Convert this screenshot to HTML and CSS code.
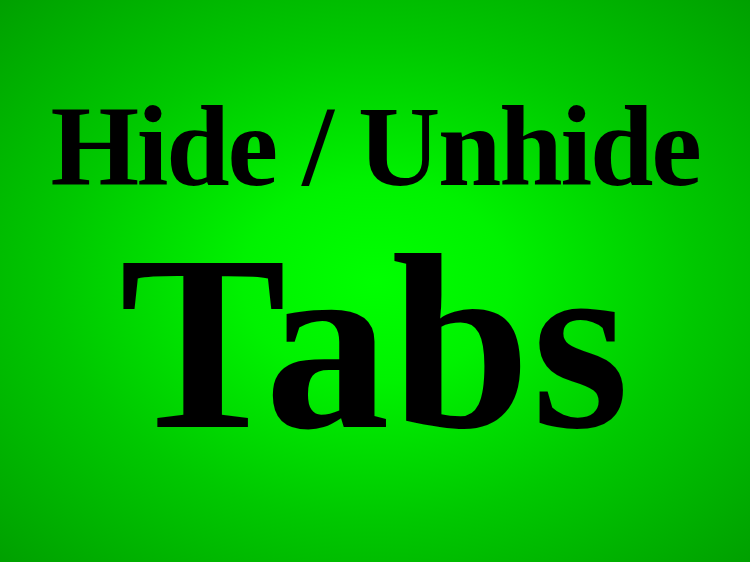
FILE: index.html
```html
<!DOCTYPE html>
<html>
<head>
  <meta charset="UTF-8" />
  <title>Hide / Unhide Tabs</title>
  <link rel="stylesheet" href="styles.css">
</head>
<body>
  <div class="banner">
    <div class="line small">Hide / Unhide</div>
    <div class="line big">Tabs</div>
  </div>
</body>
</html>
```

FILE: styles.css
```css
html, body {
  margin: 0;
  height: 100%;
}

body {
  font-family: "Liberation Serif", "Times New Roman", serif;
  font-weight: bold;
  color: #000;
}

.banner {
  height: 562px;
  display: flex;
  flex-direction: column;
  align-items: center;
  padding-top: 90px;
  box-sizing: border-box;
  background: radial-gradient(ellipse at 50% 50%, #00ff00 0%, #00f200 25%, #00c800 60%, #00a000 100%);
}

.line {
  line-height: 1;
  white-space: nowrap;
}

.small {
  font-size: 114px;
  letter-spacing: -2.2px;
}

.big {
  font-size: 250px;
  letter-spacing: 1.5px;
  margin-top: 14px;
}
```
